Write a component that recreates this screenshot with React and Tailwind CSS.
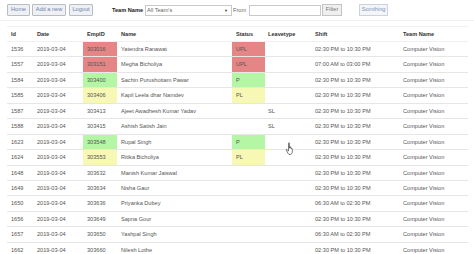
import React from "react";

const rows = [
  ["1536", "303016", "Yatendra Ranawat", "UPL", "", "02:30 PM to 10:30 PM", "red"],
  ["1557", "303151", "Megha Bicholiya", "UPL", "", "07:00 AM to 03:00 PM", "red"],
  ["1584", "303400", "Sachin Purushottam Pawar", "P", "", "02:30 PM to 10:30 PM", "green"],
  ["1585", "303406", "Kapil Leela dhar Namdev", "PL", "", "02:30 PM to 10:30 PM", "yellow"],
  ["1587", "303413", "Ajeet Awadhesh Kumar Yadav", "", "SL", "02:30 PM to 10:30 PM", ""],
  ["1588", "303415", "Ashish Satish Jain", "", "SL", "02:30 PM to 10:30 PM", ""],
  ["1623", "303548", "Rupal Singh", "P", "", "02:30 PM to 10:30 PM", "green"],
  ["1624", "303553", "Ritika Bicholiya", "PL", "", "02:30 PM to 10:30 PM", "yellow"],
  ["1648", "303632", "Manish Kumar Jaiswal", "", "", "02:30 PM to 10:30 PM", ""],
  ["1649", "303634", "Nisha Gaur", "", "", "02:30 PM to 10:30 PM", ""],
  ["1650", "303636", "Priyanka Dubey", "", "", "06:30 AM to 02:30 PM", ""],
  ["1656", "303649", "Sapna Gour", "", "", "02:30 PM to 10:30 PM", ""],
  ["1657", "303650", "Yashpal Singh", "", "", "06:30 AM to 02:30 PM", ""],
  ["1662", "303660", "Nilesh Lothe", "", "", "02:30 PM to 10:30 PM", ""],
];

const tone = {
  red: "bg-[#e58586]",
  green: "bg-[#b4f6a4]",
  yellow: "bg-[#f8f8b5]",
  "": "",
};

const Btn = ({ children, className = "" }) => (
  <button
    className={`h-[12px] px-[2px] border border-[#b9bcc4] bg-[#eef0f4] text-[#6f82a8] leading-none rounded-[1px] ${className}`}
  >
    {children}
  </button>
);

const HandCursor = () => (
  <svg className="absolute left-[285px] top-[142px]" width="11" height="13" viewBox="0 0 11 13">
    <path
      d="M3.5 1.2c0-.6.9-.6.9 0v5l.2-1.3c.1-.6.9-.5.9.1v1.2c.1-.6.9-.6.9 0v.8c.1-.6.9-.5.9.1v2.8c0 1.4-1 2.6-2.6 2.6H5c-1 0-1.6-.5-2.1-1.3L1.3 8.1c-.3-.5.3-1 .7-.6l1.5 1.6z"
      fill="#fff"
      stroke="#444"
      strokeWidth="0.7"
      strokeLinejoin="round"
    />
  </svg>
);

export default function App() {
  return (
    <div className="relative w-[474px] h-[254px] overflow-hidden bg-white text-[5.6px] text-[#555] font-['Liberation_Sans',Arial,sans-serif]">
      {/* Toolbar */}
      <div className="flex items-center h-[21px] pl-[7px] border-b border-[#f2f2f2]">
        <Btn className="w-[23px]">Home</Btn>
        <Btn className="ml-[2px] w-[34px]">Add a new</Btn>
        <Btn className="ml-[3px] w-[24px]">Logout</Btn>
        <span className="ml-[19px] font-bold text-[#222]">Team Name</span>
        <div className="ml-[2px] relative w-[87px] h-[11px] border border-[#c9c9c9] bg-white flex items-center pl-[1px] text-[#666]">
          All Team's
          <span className="absolute right-[3px] top-[2px] text-[4px] text-[#333]">▼</span>
        </div>
        <span className="ml-[1px] text-[#666]">From</span>
        <div className="ml-[3px] w-[72px] h-[11px] border border-[#c9c9c9] bg-white" />
        <button className="ml-[1px] w-[20px] h-[12px] border border-[#c4c4c4] bg-[#efefef] text-[#777] leading-none">Filter</button>
        <button className="ml-[17px] w-[29px] h-[12px] border border-[#cdd3de] bg-[#f3f5f9] text-[#7f93b8] leading-none">Somthing</button>
      </div>

      {/* Table */}
      <div className="pl-[7px] pt-[5px]">
        <table className="table-fixed border-collapse w-[461px]">
          <colgroup>
            <col className="w-[26px]" />
            <col className="w-[50px]" />
            <col className="w-[34px]" />
            <col className="w-[115px]" />
            <col className="w-[33px]" />
            <col className="w-[46px]" />
            <col className="w-[88px]" />
            <col className="w-[69px]" />
          </colgroup>
          <thead>
            <tr className="h-[15px] text-left font-bold text-[#333] border-t border-[#f0f0f0] border-b border-[#e2e2e2]">
              <th className="pl-[4px]">Id</th>
              <th className="pl-[4px]">Date</th>
              <th className="pl-[4px]">EmpID</th>
              <th className="pl-[4px]">Name</th>
              <th className="pl-[4px]">Status</th>
              <th className="pl-[3px]">Leavetype</th>
              <th className="pl-[4px]">Shift</th>
              <th className="pl-[4px]">Team Name</th>
            </tr>
          </thead>
          <tbody>
            {rows.map(([id, emp, name, status, leave, shift, t]) => (
              <tr key={id} className="h-[15.45px] border-b border-[#e6e6e6]">
                <td className="pl-[4px]">{id}</td>
                <td className="pl-[4px]">2019-03-04</td>
                <td className={`pl-[4px] ${tone[t]}`}>{emp}</td>
                <td className="pl-[4px]">{name}</td>
                <td className={`pl-[4px] ${tone[t]}`}>{status}</td>
                <td className="pl-[3px]">{leave}</td>
                <td className="pl-[4px]">{shift}</td>
                <td className="pl-[4px]">Computer Vision</td>
              </tr>
            ))}
          </tbody>
        </table>
      </div>
      <HandCursor />
    </div>
  );
}
